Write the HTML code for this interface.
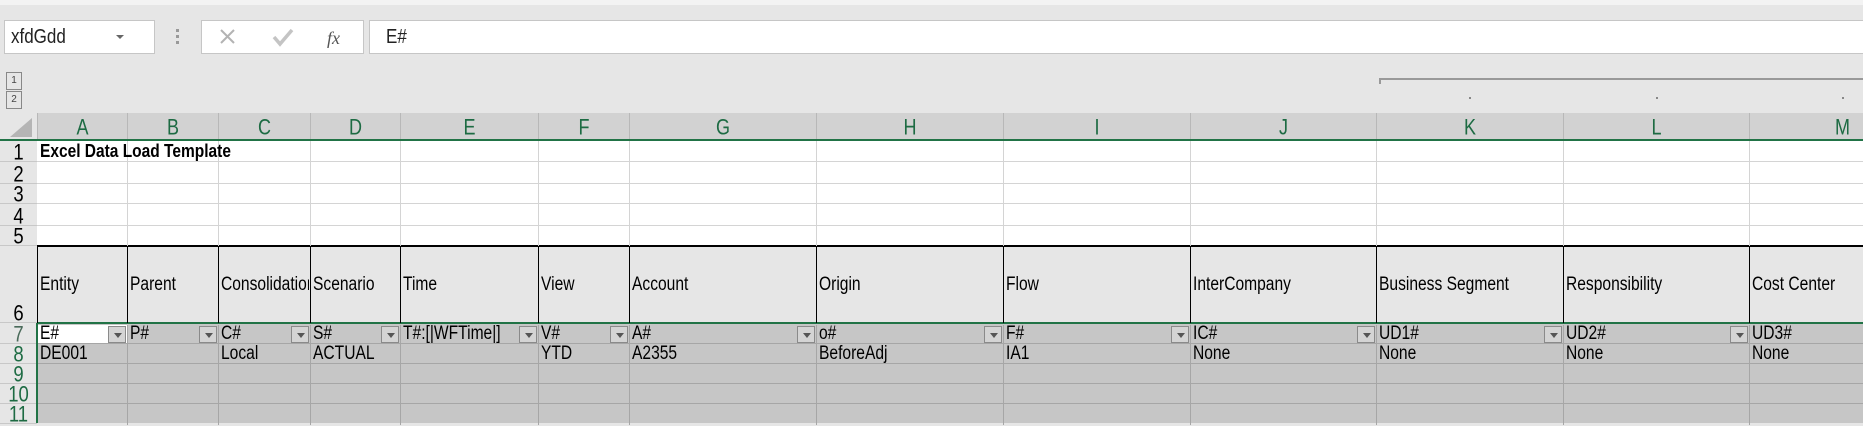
<!DOCTYPE html>
<html><head><meta charset="utf-8"><style>
*{margin:0;padding:0;box-sizing:border-box}
body{width:1863px;height:414px;overflow:hidden;background:#e6e6e6;font-family:"Liberation Sans",Arial,sans-serif;position:relative}
.a{position:absolute}
.t{display:inline-block;transform:scaleY(1.22);transform-origin:center}
.cell{position:absolute;font-size:15.6px;color:#000;padding-left:3px;white-space:nowrap;overflow:hidden;display:flex;align-items:center}
.dd{position:absolute;width:18px;height:17px;border:1px solid #8a8a8a;background:#d4d4d4}
.dd:after{content:"";position:absolute;left:5px;top:6px;border-left:4px solid transparent;border-right:4px solid transparent;border-top:5px solid #555}
</style></head><body>
<div class="a" style="left:0;top:0;width:1863px;height:5px;background:#f3f3f3"></div>
<div class="a" style="left:4px;top:20px;width:151px;height:34px;background:#fff;border:1px solid #c6c6c6"></div>
<div class="a" style="left:11px;top:22px;font-size:17px;color:#222;line-height:30px"><span class="t">xfdGdd</span></div>
<div class="a" style="left:116px;top:35px;border-left:4px solid transparent;border-right:4px solid transparent;border-top:4px solid #666"></div>
<div class="a" style="left:176px;top:29px;width:3px;height:3px;background:#999;box-shadow:0 6px 0 #999,0 12px 0 #999"></div>
<div class="a" style="left:201px;top:20px;width:163px;height:34px;background:#fff;border:1px solid #c6c6c6"></div>
<svg class="a" style="left:201px;top:20px" width="163" height="34"><path d="M20 10 L33 23 M33 10 L20 23" stroke="#b3b3b3" stroke-width="2" fill="none"/><path d="M73 17 L79 24 L91 10" stroke="#c4c4c4" stroke-width="3.5" fill="none"/><text x="126" y="24" font-family="Liberation Serif" font-style="italic" font-size="18" fill="#555">fx</text></svg>
<div class="a" style="left:369px;top:20px;width:1500px;height:34px;background:#fff;border:1px solid #c6c6c6"></div>
<div class="a" style="left:386px;top:22px;font-size:17px;color:#222;line-height:30px"><span class="t">E#</span></div>
<div class="a" style="left:6px;top:72px;width:16px;height:18px;border:1px solid #888;font-size:10px;text-align:center;line-height:16px;color:#444">1</div>
<div class="a" style="left:6px;top:91px;width:16px;height:18px;border:1px solid #888;font-size:10px;text-align:center;line-height:16px;color:#444">2</div>
<div class="a" style="left:1379px;top:78px;width:500px;height:6px;border-top:2px solid #999;border-left:2px solid #999"></div>
<div class="a" style="left:1469px;top:97px;width:2px;height:2px;background:#888"></div>
<div class="a" style="left:1656px;top:97px;width:2px;height:2px;background:#888"></div>
<div class="a" style="left:1842px;top:97px;width:2px;height:2px;background:#888"></div>
<div class="a" style="left:0;top:113px;width:1863px;height:28px;background:#d2d2d2"></div>
<div class="a" style="left:0;top:113px;width:37px;height:28px;background:#e6e6e6"></div>
<div class="a" style="left:10px;top:118px;width:0;height:0;border-left:22px solid transparent;border-bottom:19px solid #b5b5b5"></div>
<div id="g"></div>
<script>
(function(){
var L=[37,127,218,310,400,538,629,816,1003,1190,1376,1563,1749,1935];
var T=[141,162,184,204,226,246,323,344,364,384,404,424];
var letters="ABCDEFGHIJKLM";
var h="";
for(var i=0;i<13;i++){
 h+='<div class="a" style="left:'+L[i]+'px;top:113px;width:'+(L[i+1]-L[i])+'px;height:27px;border-left:1px solid #b8b8b8;text-align:center;font-size:18px;color:#1d6b43;line-height:28px"><span class="t">'+letters[i]+'</span></div>';
}
h+='<div class="a" style="left:0;top:139px;width:1863px;height:2px;background:#217346"></div>';
h+='<div class="a" style="left:37px;top:141px;width:1830px;height:105px;background:#fff"></div>';
h+='<div class="a" style="left:37px;top:246px;width:1830px;height:77px;background:#e6e6e6"></div>';
h+='<div class="a" style="left:37px;top:323px;width:1830px;height:100px;background:#c6c6c6"></div>';
for(var r=0;r<11;r++){
 var col=r<6?'#000':(r==6?'#4a6a5a':'#1d6b43');
 var tp=T[r],ht=T[r+1]-T[r];
 h+='<div class="a" style="left:0;top:'+tp+'px;width:37px;height:'+ht+'px;border-bottom:1px solid #c8c8c8;font-size:18.5px;color:'+col+';display:flex;align-items:flex-end;justify-content:center;line-height:19px"><span class="t">'+(r+1)+'</span></div>';
 if(r>0){var lc=r<=5?(r==5?'#000':'#d4d4d4'):(r==6?'#217346':'#a6a6a6');
 h+='<div class="a" style="left:37px;top:'+(tp-1)+'px;width:1830px;height:'+(r==5||r==6?2:1)+'px;background:'+lc+'"></div>';}
}
for(var i=1;i<13;i++){
 h+='<div class="a" style="left:'+L[i]+'px;top:141px;width:1px;height:105px;background:#d4d4d4"></div>';
 h+='<div class="a" style="left:'+L[i]+'px;top:246px;width:1px;height:77px;background:#000"></div>';
 h+='<div class="a" style="left:'+L[i]+'px;top:325px;width:1px;height:100px;background:#a6a6a6"></div>';
}
h+='<div class="a" style="left:37px;top:246px;width:1px;height:77px;background:#000"></div>';
h+='<div class="a" style="left:36px;top:323px;width:2px;height:100px;background:#217346"></div>';
h+='<div class="a" style="left:38px;top:325px;width:89px;height:18px;background:#fff"></div>';
function c(col,row,txt,extra){h+='<div class="cell" style="left:'+L[col]+'px;top:'+T[row]+'px;width:'+(L[col+1]-L[col]-20)+'px;height:'+(T[row+1]-T[row])+'px;'+(extra||'')+'"><span class="t">'+txt+'</span></div>';}
c(0,0,'<b>Excel Data Load Template</b>','width:300px;font-size:15.5px');
var hd=["Entity","Parent","Consolidation","Scenario","Time","View","Account","Origin","Flow","InterCompany","Business Segment","Responsibility","Cost Center"];
var r7=["E#","P#","C#","S#","T#:[|WFTime|]","V#","A#","o#","F#","IC#","UD1#","UD2#","UD3#"];
var r8=["DE001","","Local","ACTUAL","","YTD","A2355","BeforeAdj","IA1","None","None","None","None"];
for(var i=0;i<13;i++){
 h+='<div class="cell" style="left:'+L[i]+'px;top:246px;width:'+(L[i+1]-L[i]-1)+'px;height:77px"><span class="t">'+hd[i]+'</span></div>';
 c(i,6,r7[i]);c(i,7,r8[i]);
 if(i<12)h+='<div class="dd" style="left:'+(L[i+1]-19)+'px;top:326px"></div>';
}
document.getElementById('g').innerHTML=h;
})();
</script>
</body></html>
